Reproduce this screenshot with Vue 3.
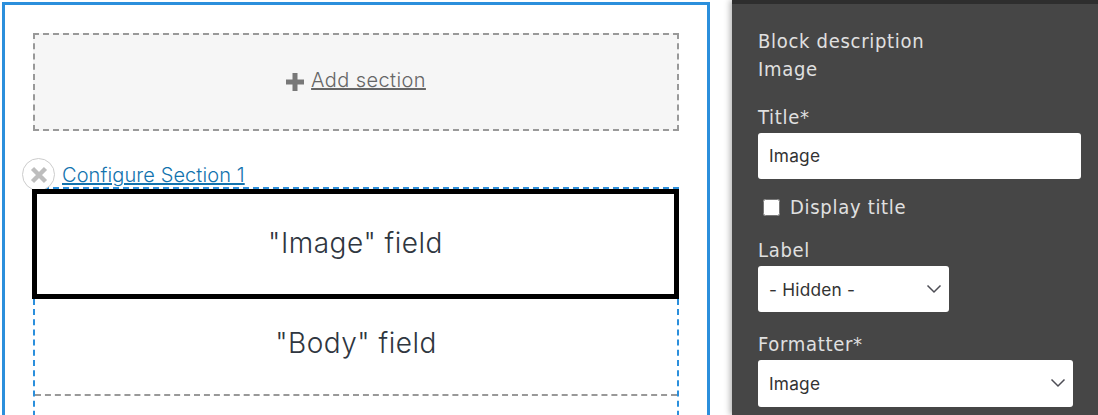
<script setup>
const title = 'Image'
</script>

<template>
  <div class="page">
    <main class="canvas">
      <div class="add-section">
        <svg class="plus" width="18" height="18" viewBox="0 0 18 18"><path d="M6.500 0h5v6.500H18v5h-6.500V18h-5v-6.500H0v-5h6.500z" fill="#787878"/></svg>
        <a class="add-link" href="#">Add section</a>
      </div>
      <div class="section-head">
        <button class="close" aria-label="Remove section">
          <svg width="18" height="18" viewBox="0 0 18 18"><path d="M2.500 2.500l13 13M15.500 2.500l-13 13" stroke="#bdbdbd" stroke-width="4.400" fill="none"/></svg>
        </button>
        <a class="config-link" href="#">Configure Section 1</a>
      </div>
      <section class="section">
        <div class="block selected">"Image" field</div>
        <div class="block body">"Body" field</div>
      </section>
    </main>
    <aside class="panel">
      <div class="description">Block description<br>Image</div>
      <label class="lbl title-lbl" for="t">Title*</label>
      <input id="t" class="control title-input" :value="title">
      <label class="check"><input type="checkbox"><span>Display title</span></label>
      <label class="lbl label-lbl">Label</label>
      <div class="select-wrap label-select">
        <select class="control"><option>- Hidden -</option></select>
        <svg class="chev" width="16" height="10" viewBox="0 0 16 10"><path d="M1.500 1.500L8 8l6.500-6.500" stroke="#4d4d55" stroke-width="1.500" fill="none"/></svg>
      </div>
      <label class="lbl fmt-lbl">Formatter*</label>
      <div class="select-wrap fmt-select">
        <select class="control"><option>Image</option></select>
        <svg class="chev" width="16" height="10" viewBox="0 0 16 10"><path d="M1.500 1.500L8 8l6.500-6.500" stroke="#4d4d55" stroke-width="1.500" fill="none"/></svg>
      </div>
    </aside>
  </div>
</template>

<style scoped>
.page { display: flex; height: 415px; overflow: hidden; background: #fff; font-family: Inter, sans-serif; }
.canvas { box-sizing: border-box; width: 708px; height: 413px; margin: 2px 0 0 2px; border: 3px solid #2b8fdc; border-bottom: 0; padding: 28px 28px 0; flex: none; overflow: hidden; }
.add-section { box-sizing: border-box; height: 98px; background: #f6f6f6; border: 2px dashed #999; display: flex; align-items: center; justify-content: center; gap: 7px; }
.add-link { color: #666; font-size: 20px; font-weight: 300; letter-spacing: .4px; text-decoration: underline; margin-top: -5px; }
.section-head { position: relative; height: 56px; display: flex; align-items: flex-end; padding-left: 29px; }
.close { position: absolute; left: -11px; bottom: -4px; box-sizing: border-box; width: 33px; height: 33px; border-radius: 50%; border: 1px solid #ccc; background: #fff; padding: 0; display: flex; align-items: center; justify-content: center; }
.config-link { color: #1273ae; font-size: 20px; font-weight: 300; letter-spacing: .1px; line-height: 24px; text-decoration: underline; }
.section { box-sizing: border-box; height: 240px; border: 2px dashed #2b8fdc; border-bottom: 0; }
.block { display: flex; align-items: center; justify-content: center; color: #2f3640; font-size: 28px; font-weight: 300; letter-spacing: .5px; }
.selected { box-sizing: border-box; height: 110px; margin: 0 -2px 0 -3px; border: 5px solid #000; background: #fff; position: relative; padding-bottom: 3px; }
.body { box-sizing: border-box; height: 97px; border-bottom: 2px dashed #999; padding-bottom: 8px; }
.panel { box-sizing: border-box; width: 366px; height: 415px; margin-left: 22px; flex: none; background: #464646; border-top: 4px solid #2e2e2e; box-shadow: -2px 0 6px rgba(0,0,0,.3); padding: 23px 17px 0 26px; color: #e0e0e0; font-family: "DejaVu Sans", sans-serif; font-stretch: condensed; font-size: 20px; letter-spacing: .7px; }
.description { line-height: 28px; }
.lbl { display: block; line-height: 24px; }
.title-lbl { margin-top: 22px; }
.control { box-sizing: border-box; display: block; width: 100%; height: 46px; border: 0; border-radius: 3px; background: #fff; padding: 0 11px; color: #333; font: 17.300px Inter, sans-serif; letter-spacing: .2px; appearance: none; }
.title-input { width: 323px; margin-top: 4px; height: 46px; padding-bottom: 2px; }
.check { display: flex; align-items: center; gap: 10px; margin: 17px 0 0 5px; line-height: 22px; }
.check input { width: 17px; height: 17px; margin: 0; }
.label-lbl { margin-top: 20px; }
.select-wrap { position: relative; margin-top: 4px; }
.label-select { width: 191px; }
.fmt-select { width: 315px; height: 47px; margin-top: 4px; }
.fmt-select .control { height: 47px; }
.fmt-lbl { margin-top: 20px; }
.chev { position: absolute; right: 7px; top: 18px; }
</style>
